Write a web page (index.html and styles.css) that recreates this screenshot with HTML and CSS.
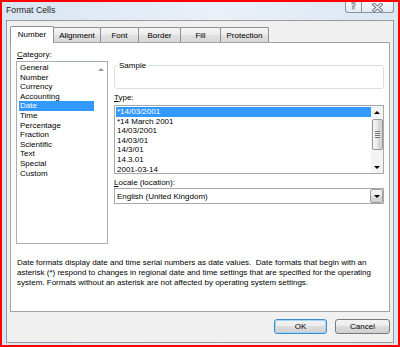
FILE: index.html
```html
<!DOCTYPE html>
<html>
<head>
<meta charset="utf-8">
<link rel="stylesheet" href="styles.css">
</head>
<body>
<div class="window">
  <div class="titlebar">
    <span class="title">Format Cells</span>
    <div class="controls">
      <div class="ctl help"><span class="help-glyph">?</span></div>
      <div class="ctl close">
        <svg width="11" height="9" viewBox="0 0 11 9">
          <path d="M2 1.5 L9 7.5 M9 1.5 L2 7.5" stroke="#6b7480" stroke-width="3.2" stroke-linecap="square" fill="none"/>
          <path d="M2 1.5 L9 7.5 M9 1.5 L2 7.5" stroke="#f4f6f9" stroke-width="1.4" stroke-linecap="square" fill="none"/>
        </svg>
      </div>
    </div>
  </div>
  <div class="frame">
    <div class="tabs">
      <div class="tab active t-number">Number</div>
      <div class="tab t-alignment">Alignment</div>
      <div class="tab t-font">Font</div>
      <div class="tab t-border">Border</div>
      <div class="tab t-fill">Fill</div>
      <div class="tab t-protection">Protection</div>
    </div>
    <div class="panel">
      <div class="top">
        <div class="left">
          <div class="label cat-label"><u>C</u>ategory:</div>
          <div class="catlist">
            <div class="items">
              <div class="item">General</div>
              <div class="item">Number</div>
              <div class="item">Currency</div>
              <div class="item">Accounting</div>
              <div class="item sel">Date</div>
              <div class="item">Time</div>
              <div class="item">Percentage</div>
              <div class="item">Fraction</div>
              <div class="item">Scientific</div>
              <div class="item">Text</div>
              <div class="item">Special</div>
              <div class="item">Custom</div>
            </div>
            <div class="blank-scroll"><span class="tri-up gray"></span></div>
          </div>
        </div>
        <div class="right">
          <div class="sample">
            <div class="sample-label">Sample</div>
          </div>
          <div class="label type-label"><u>T</u>ype:</div>
          <div class="typelist">
            <div class="items">
              <div class="item sel">*14/03/2001</div>
              <div class="item">*14 March 2001</div>
              <div class="item">14/03/2001</div>
              <div class="item">14/03/01</div>
              <div class="item">14/3/01</div>
              <div class="item">14.3.01</div>
              <div class="item">2001-03-14</div>
            </div>
            <div class="scroll">
              <div class="arrow"><span class="tri-up"></span></div>
              <div class="thumb"><span class="grip"></span></div>
              <div class="spacer"></div>
              <div class="arrow"><span class="tri-down"></span></div>
            </div>
          </div>
          <div class="label locale-label"><u>L</u>ocale (location):</div>
          <div class="select">
            <span class="select-text">English (United Kingdom)</span>
            <span class="dd"><span class="tri-down"></span></span>
          </div>
        </div>
      </div>
      <div class="desc">Date formats display date and time serial numbers as date values.&nbsp; Date formats that begin with an<br>asterisk (*) respond to changes in regional date and time settings that are specified for the operating<br>system. Formats without an asterisk are not affected by operating system settings.</div>
    </div>
    <div class="buttons">
      <div class="btn ok">OK</div>
      <div class="btn cancel">Cancel</div>
    </div>
  </div>
</div>
</body>
</html>
```

FILE: styles.css
```css
html, body {
  margin: 0;
  padding: 0;
}
body {
  font-family: "Liberation Sans", Arial, sans-serif;
  font-size: 8px;
  color: #000;
  background: #fff;
}
.window {
  box-sizing: border-box;
  width: 400px;
  height: 347px;
  border: 2px solid #f00;
  background: linear-gradient(90deg, #d9e5f2, #e9f0f8 55%, #dbe6f2);
  display: flex;
  flex-direction: column;
}
.titlebar {
  height: 18px;
  flex: none;
  display: flex;
  align-items: flex-start;
  padding: 0 4px;
}
.title {
  font-size: 8.7px;
  line-height: 16px;
  color: #222;
}
.controls {
  margin-left: auto;
  display: flex;
}
.ctl {
  box-sizing: border-box;
  height: 11px;
  border: 1px solid #8593a6;
  border-top: none;
  background: linear-gradient(#f6f8fb, #e3e9f0);
  display: flex;
  align-items: center;
  justify-content: center;
}
.help {
  width: 17px;
  border-radius: 0 0 0 3px;
}
.help-glyph {
  font-family: "DejaVu Sans", sans-serif;
  font-size: 8px;
  line-height: 10px;
  font-weight: bold;
  color: #f4f6f9;
  -webkit-text-stroke: 0.6px #6b7480;
}
.close {
  width: 32px;
  border-left: none;
  border-radius: 0 0 3px 0;
}
.frame {
  flex: 1;
  margin: 0 4px 2px 4px;
  border: 1px solid #9a9a9a;
  background: #f0f0f0;
  padding: 0 3px;
  display: flex;
  flex-direction: column;
}
.tabs {
  display: flex;
  align-items: flex-end;
  margin-top: 5px;
  height: 16px;
  position: relative;
  z-index: 1;
}
.tab {
  box-sizing: border-box;
  height: 15px;
  border: 1px solid #8d9096;
  border-bottom: none;
  margin-right: -1px;
  border-radius: 2px 2px 0 0;
  background: linear-gradient(#f4f4f4, #ececec 50%, #e0e0e0 50%, #d8d8d8);
  display: flex;
  align-items: center;
  justify-content: center;
}
.tab.active {
  height: 17px;
  margin-bottom: -1px;
  background: #fff;
  padding-bottom: 1px;
}
.t-number { width: 44px; }
.t-alignment { width: 48px; }
.t-font { width: 39px; }
.t-border { width: 43px; }
.t-fill { width: 41px; }
.t-protection { width: 49px; }
.panel {
  box-sizing: border-box;
  height: 270px;
  border: 1px solid #a3a3a3;
  background: #fff;
  padding: 6px 5px 0 5px;
}
.top {
  display: flex;
  gap: 6px;
  height: 195px;
}
.left {
  width: 92px;
}
.label {
  line-height: 11px;
  white-space: nowrap;
}
.cat-label {
  line-height: 12px;
  margin-left: 1px;
}
.catlist {
  box-sizing: border-box;
  height: 183px;
  border: 1px solid #a9adb4;
  display: flex;
}
.catlist .items {
  flex: 1;
  padding: 1px 0 0 2px;
}
.item {
  height: 9.6px;
  line-height: 9.6px;
  padding-left: 1px;
  white-space: nowrap;
}
.item.sel {
  background: #3399ff;
  color: #fff;
}
.blank-scroll {
  width: 13px;
  display: flex;
  justify-content: center;
  padding-top: 6px;
  box-sizing: border-box;
}
.tri-up {
  display: block;
  width: 0;
  height: 0;
  border-left: 3px solid transparent;
  border-right: 3px solid transparent;
  border-bottom: 3px solid #000;
}
.tri-up.gray {
  border-bottom-color: #9a9a9a;
}
.tri-down {
  display: block;
  width: 0;
  height: 0;
  border-left: 3px solid transparent;
  border-right: 3px solid transparent;
  border-top: 3px solid #000;
}
.right {
  flex: 1;
  display: flex;
  flex-direction: column;
}
.sample {
  box-sizing: border-box;
  margin-top: 16px;
  height: 24px;
  border: 1px solid #d8e0e6;
  border-radius: 3px;
}
.sample-label {
  width: fit-content;
  margin: -5px 0 0 3px;
  padding: 0 1px;
  line-height: 10px;
  background: #fff;
}
.type-label {
  margin-top: 3px;
}
.typelist {
  box-sizing: border-box;
  margin-top: 2px;
  height: 69px;
  border: 1px solid #a5a8ad;
  display: flex;
  overflow: hidden;
}
.typelist .items {
  flex: 1;
  padding: 1px 0 0 1px;
  overflow: hidden;
}
.scroll {
  width: 12px;
  background: #f3f3f3;
  display: flex;
  flex-direction: column;
  align-items: center;
}
.arrow {
  height: 13px;
  display: flex;
  align-items: center;
  justify-content: center;
}
.scroll .arrow:last-child {
  height: 12px;
}
.thumb {
  box-sizing: border-box;
  width: 11px;
  height: 31px;
  border: 1px solid #979797;
  border-radius: 2px;
  background: linear-gradient(90deg, #f5f5f5, #e8e8e8 50%, #d9d9d9 50%, #d2d2d2);
  display: flex;
  align-items: center;
  justify-content: center;
}
.grip {
  display: block;
  width: 5px;
  height: 7px;
  background: repeating-linear-gradient(to bottom, #6f6f6f 0 1px, #f2f2f2 1px 2px);
}
.spacer {
  flex: 1;
}
.locale-label {
  margin-top: 3px;
}
.select {
  box-sizing: border-box;
  height: 16px;
  border: 1px solid #a5a8ad;
  display: flex;
  align-items: center;
}
.select-text {
  padding-left: 2px;
}
.dd {
  box-sizing: border-box;
  margin-left: auto;
  width: 13px;
  height: 14px;
  border: 1px solid #9c9c9c;
  border-radius: 2px;
  background: linear-gradient(#f4f4f4, #e9e9e9 50%, #dadada 50%, #d2d2d2);
  display: flex;
  align-items: center;
  justify-content: center;
}
.desc {
  margin-top: 14px;
  margin-left: 1px;
  line-height: 10px;
  white-space: nowrap;
}
.buttons {
  display: flex;
  justify-content: flex-end;
  gap: 8px;
  margin-top: 7px;
}
.btn {
  box-sizing: border-box;
  height: 15px;
  border: 1px solid #7a7a7a;
  border-radius: 3px;
  background: linear-gradient(#f3f3f3, #ebebeb 50%, #dddddd 50%, #d0d0d0);
  display: flex;
  align-items: center;
  justify-content: center;
}
.ok {
  width: 53px;
  border-color: #3c8ccc;
  box-shadow: inset 0 0 0 1px #a6d4f5;
}
.cancel {
  width: 55px;
}
```
